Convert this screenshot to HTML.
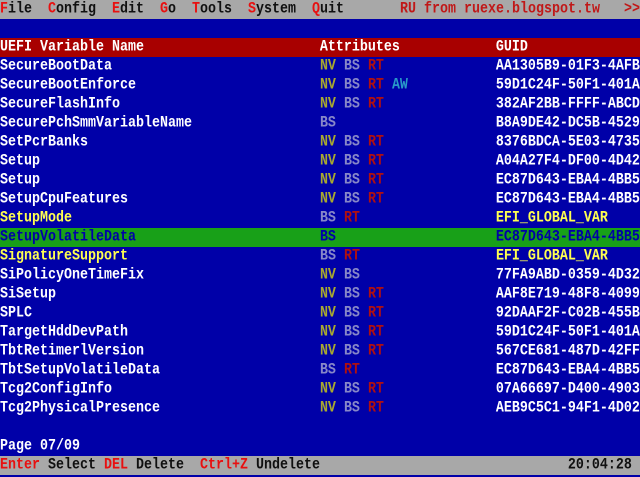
<!DOCTYPE html>
<html><head><style>
html,body{margin:0;padding:0;background:#0000a8;width:640px;height:475px;overflow:hidden}
.r{position:absolute;left:0;width:640px;height:19px;white-space:pre;font-family:"Liberation Mono",monospace;font-size:13.33px;line-height:19px;color:#fff;font-weight:bold}
.r span{display:inline-block;transform:scaleY(1.2)}
.g{background:#a8a8a8;color:#101010}
.h{background:#a80000}
.sel{background:#18a018;color:#0000a8}
.R{color:#e81010}.dR{color:#c01818}.Y{color:#ffff50}.nv{color:#a8a830}.bs{color:#8888c8}.rt{color:#b01010}.aw{color:#2898c8}
.sel .bs{color:#0000a8}
</style></head><body>
<div class="r g" style="top:0"><span><b class="R">F</b>ile  <b class="R">C</b>onfig  <b class="R">E</b>dit  <b class="R">G</b>o  <b class="R">T</b>ools  <b class="R">S</b>ystem  <b class="R">Q</b>uit       <b class="dR">RU from ruexe.blogspot.tw</b>   <b class="dR">&gt;&gt;</b></span></div>
<div class="r h" style="top:38px"><span>UEFI Variable Name                      Attributes            GUID</span></div>
<div class="r" style="top:57px"><span>SecureBootData                          <b class="nv">NV</b> <b class="bs">BS</b> <b class="rt">RT</b>              AA1305B9-01F3-4AFB</span></div>
<div class="r" style="top:76px"><span>SecureBootEnforce                       <b class="nv">NV</b> <b class="bs">BS</b> <b class="rt">RT</b> <b class="aw">AW</b>           59D1C24F-50F1-401A</span></div>
<div class="r" style="top:95px"><span>SecureFlashInfo                         <b class="nv">NV</b> <b class="bs">BS</b> <b class="rt">RT</b>              382AF2BB-FFFF-ABCD</span></div>
<div class="r" style="top:114px"><span>SecurePchSmmVariableName                <b class="bs">BS</b>                    B8A9DE42-DC5B-4529</span></div>
<div class="r" style="top:133px"><span>SetPcrBanks                             <b class="nv">NV</b> <b class="bs">BS</b> <b class="rt">RT</b>              8376BDCA-5E03-4735</span></div>
<div class="r" style="top:152px"><span>Setup                                   <b class="nv">NV</b> <b class="bs">BS</b> <b class="rt">RT</b>              A04A27F4-DF00-4D42</span></div>
<div class="r" style="top:171px"><span>Setup                                   <b class="nv">NV</b> <b class="bs">BS</b> <b class="rt">RT</b>              EC87D643-EBA4-4BB5</span></div>
<div class="r" style="top:190px"><span>SetupCpuFeatures                        <b class="nv">NV</b> <b class="bs">BS</b> <b class="rt">RT</b>              EC87D643-EBA4-4BB5</span></div>
<div class="r" style="top:209px"><span><b class="Y">SetupMode</b>                               <b class="bs">BS</b> <b class="rt">RT</b>                 <b class="Y">EFI_GLOBAL_VAR</b></span></div>
<div class="r sel" style="top:228px"><span>SetupVolatileData                       <b class="bs">BS</b>                    EC87D643-EBA4-4BB5</span></div>
<div class="r" style="top:247px"><span><b class="Y">SignatureSupport</b>                        <b class="bs">BS</b> <b class="rt">RT</b>                 <b class="Y">EFI_GLOBAL_VAR</b></span></div>
<div class="r" style="top:266px"><span>SiPolicyOneTimeFix                      <b class="nv">NV</b> <b class="bs">BS</b>                 77FA9ABD-0359-4D32</span></div>
<div class="r" style="top:285px"><span>SiSetup                                 <b class="nv">NV</b> <b class="bs">BS</b> <b class="rt">RT</b>              AAF8E719-48F8-4099</span></div>
<div class="r" style="top:304px"><span>SPLC                                    <b class="nv">NV</b> <b class="bs">BS</b> <b class="rt">RT</b>              92DAAF2F-C02B-455B</span></div>
<div class="r" style="top:323px"><span>TargetHddDevPath                        <b class="nv">NV</b> <b class="bs">BS</b> <b class="rt">RT</b>              59D1C24F-50F1-401A</span></div>
<div class="r" style="top:342px"><span>TbtRetimerlVersion                      <b class="nv">NV</b> <b class="bs">BS</b> <b class="rt">RT</b>              567CE681-487D-42FF</span></div>
<div class="r" style="top:361px"><span>TbtSetupVolatileData                    <b class="bs">BS</b> <b class="rt">RT</b>                 EC87D643-EBA4-4BB5</span></div>
<div class="r" style="top:380px"><span>Tcg2ConfigInfo                          <b class="nv">NV</b> <b class="bs">BS</b> <b class="rt">RT</b>              07A66697-D400-4903</span></div>
<div class="r" style="top:399px"><span>Tcg2PhysicalPresence                    <b class="nv">NV</b> <b class="bs">BS</b> <b class="rt">RT</b>              AEB9C5C1-94F1-4D02</span></div>
<div class="r" style="top:437px"><span>Page 07/09</span></div>
<div class="r g" style="top:456px"><span><b class="R">Enter</b> Select <b class="R">DEL</b> Delete  <b class="R">Ctrl+Z</b> Undelete                               20:04:28</span></div>
</body></html>
